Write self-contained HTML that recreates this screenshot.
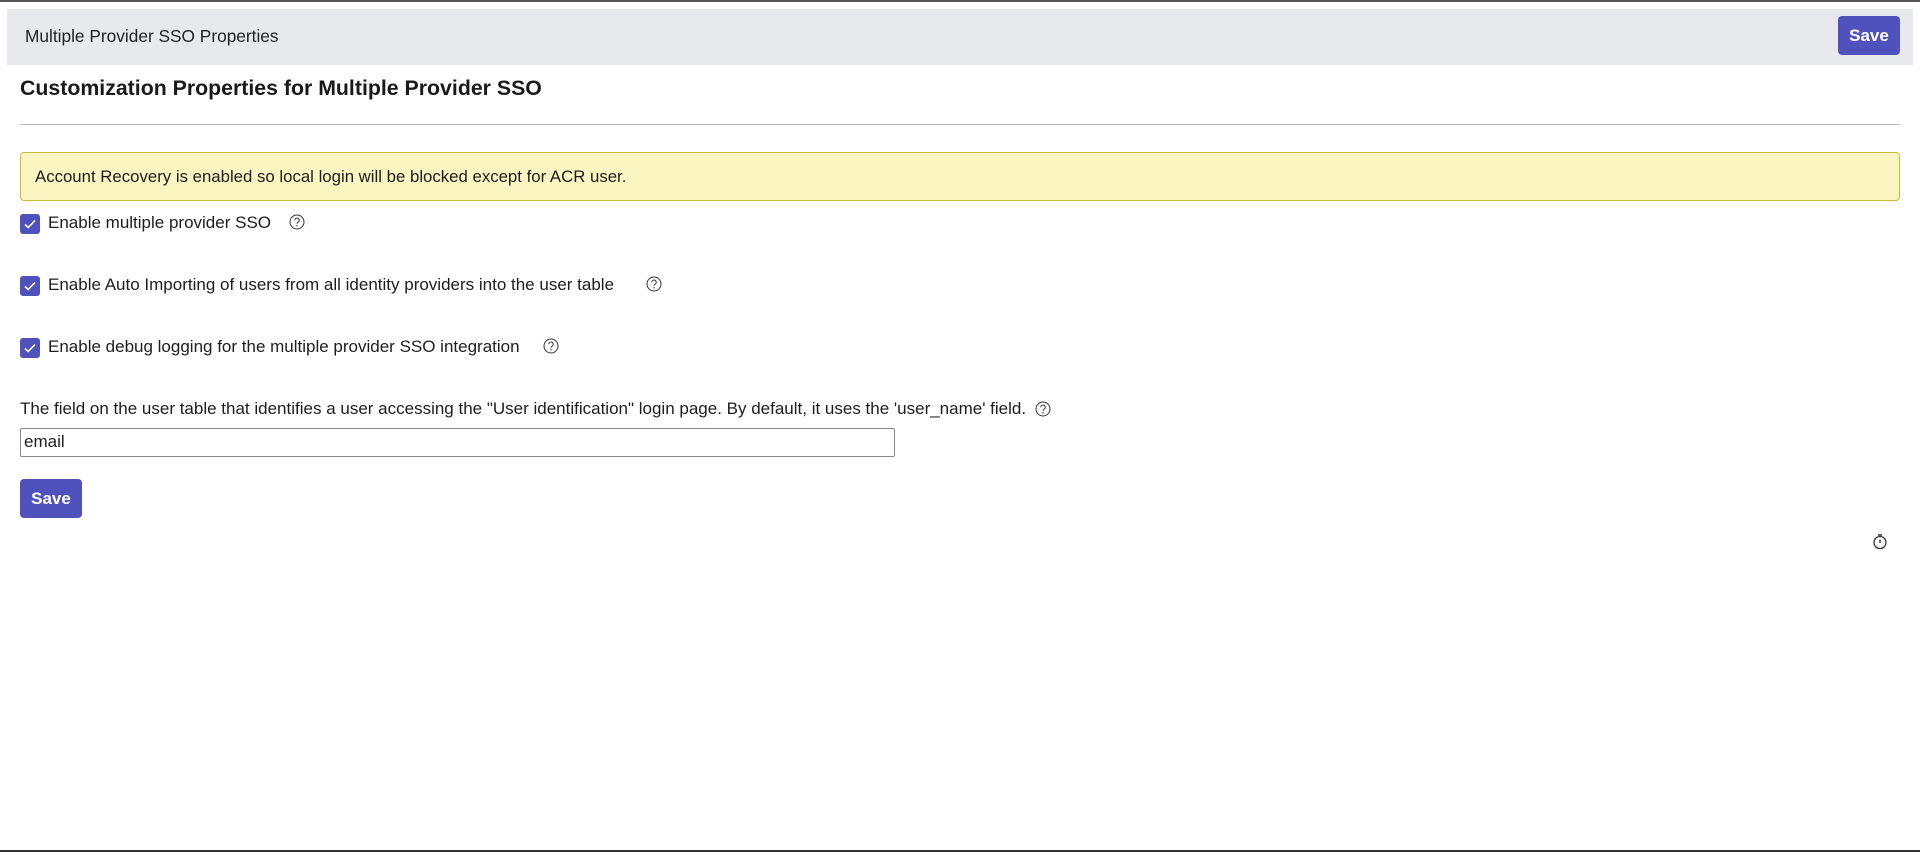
<!DOCTYPE html>
<html><head><meta charset="utf-8"><style>
*{margin:0;padding:0;box-sizing:border-box}
body{width:1920px;height:852px;background:#fff;font-family:"Liberation Sans",sans-serif;color:#1d1d1d;position:relative;overflow:hidden}
.abs{position:absolute}
.topline{left:0;top:0;width:1920px;height:2px;background:#555}
.botline{left:0;top:850px;width:1920px;height:2px;background:#333}
.header{left:7px;top:9px;width:1906px;height:56px;background:#e8e9ed}
.htitle{left:25px;top:26px;font-size:17.3px;color:#222}
.btn{background:#4f52bd;color:#fff;font-weight:bold;font-size:17px;border-radius:4px;display:flex;align-items:center;justify-content:center}
h1{position:absolute;left:20px;top:76px;font-size:21.3px;font-weight:bold;color:#1a1a1a}
.hr{left:20px;top:124px;width:1880px;height:1px;background:#bbb}
.alert{left:20px;top:152px;width:1880px;height:49px;background:#fbf6c1;border:1px solid #c9bb3a;border-radius:4px;font-size:16.8px;padding:14px 0 0 14px}
.lbl{font-size:17px}
.help{width:16px;height:16px}
.input{left:20px;top:428px;width:875px;height:29px;border:1px solid #888;border-radius:2px;font-size:17px;padding:3px 0 0 3px}
</style></head><body>
<div class="abs topline"></div>
<div class="abs header"></div>
<div class="abs htitle">Multiple Provider SSO Properties</div>
<div class="abs btn" style="left:1838px;top:16px;width:62px;height:39px">Save</div>
<h1>Customization Properties for Multiple Provider SSO</h1>
<div class="abs hr"></div>
<div class="abs alert">Account Recovery is enabled so local login will be blocked except for ACR user.</div>

<svg width="0" height="0" style="position:absolute"><defs>
<symbol id="q" viewBox="0 0 16 16"><circle cx="8" cy="8" r="7" fill="none" stroke="#333" stroke-width="1"/><path d="M5.8 6.2a2.2 2.2 0 1 1 3.2 2c-.7.4-1 .8-1 1.6" fill="none" stroke="#333" stroke-width="1"/><circle cx="8" cy="11.8" r=".7" fill="#333"/></symbol>
<symbol id="ck" viewBox="0 0 20 20"><rect width="20" height="20" rx="3" fill="#4f52bd"/><path d="M5 10.5l3.2 3L15 6.5" fill="none" stroke="#fff" stroke-width="1.6"/></symbol>
</defs></svg>

<svg class="abs" style="left:20px;top:214px" width="20" height="20"><use href="#ck"/></svg>
<div class="abs lbl" style="left:48px;top:213px">Enable multiple provider SSO</div>
<svg class="abs help" style="left:289px;top:214px"><use href="#q"/></svg>

<svg class="abs" style="left:20px;top:276px" width="20" height="20"><use href="#ck"/></svg>
<div class="abs lbl" style="left:48px;top:275px">Enable Auto Importing of users from all identity providers into the user table</div>
<svg class="abs help" style="left:646px;top:276px"><use href="#q"/></svg>

<svg class="abs" style="left:20px;top:338px" width="20" height="20"><use href="#ck"/></svg>
<div class="abs lbl" style="left:48px;top:337px">Enable debug logging for the multiple provider SSO integration</div>
<svg class="abs help" style="left:543px;top:338px"><use href="#q"/></svg>

<div class="abs lbl" style="left:20px;top:399px">The field on the user table that identifies a user accessing the "User identification" login page. By default, it uses the 'user_name' field.</div>
<svg class="abs help" style="left:1035px;top:401px"><use href="#q"/></svg>
<div class="abs input">email</div>
<div class="abs btn" style="left:20px;top:479px;width:62px;height:39px">Save</div>

<svg class="abs" style="left:1872px;top:533px" width="16" height="17" viewBox="0 0 16 17"><circle cx="8" cy="9.5" r="6" fill="none" stroke="#333" stroke-width="1.3"/><path d="M6 2h4M8 6.5v3.5" stroke="#333" stroke-width="1.4"/></svg>
<div class="abs botline"></div>
</body></html>
